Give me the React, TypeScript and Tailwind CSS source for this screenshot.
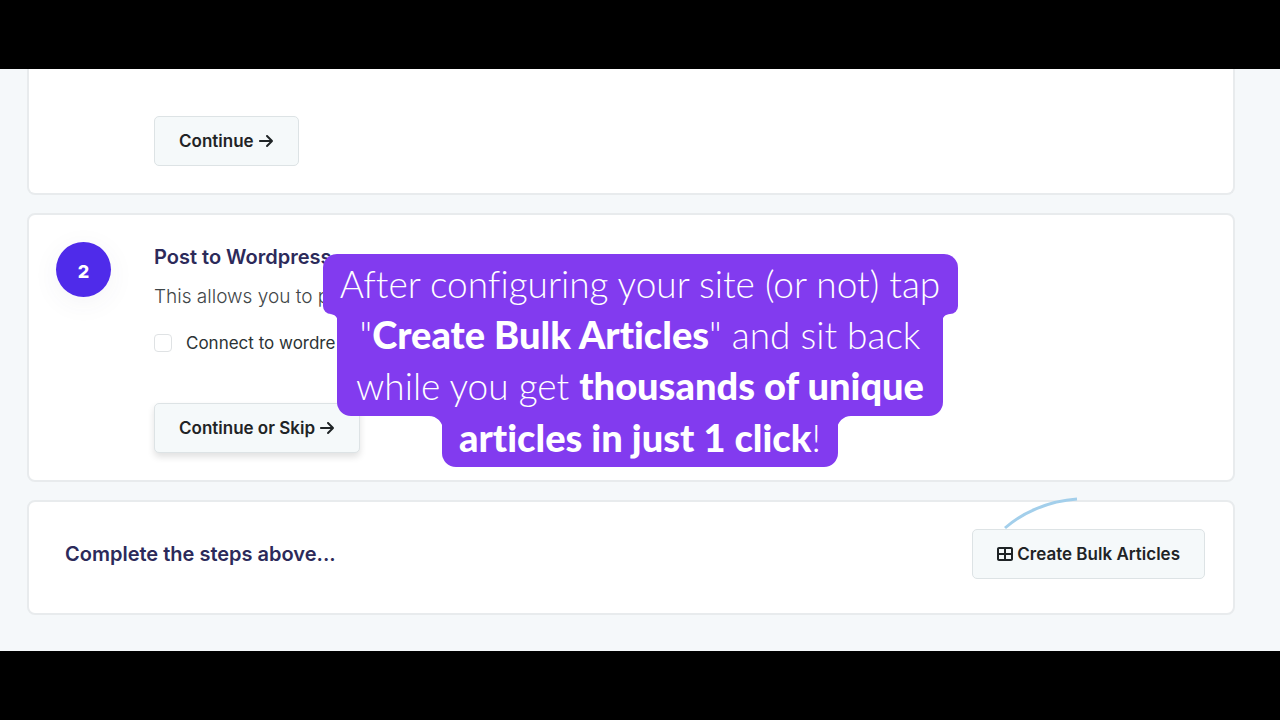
import type { ReactNode } from "react";
import { FaArrowRight, FaTableCellsLarge } from "react-icons/fa6";

const buttonBase =
  "inline-flex h-[50px] items-center gap-1 rounded-[5px] border border-[#dde3e5] bg-[#f5f9fa] px-6 text-[17px] leading-6 font-semibold whitespace-nowrap text-[#1f2426]";

function Card({ className, children }: { className: string; children: ReactNode }) {
  return (
    <section className={`relative border-2 border-[#e8ebed] bg-white ${className}`}>
      {children}
    </section>
  );
}

/* Inward curve joining a wide caption row to the narrower one below it. */
function Notch({ className, flip = false }: { className: string; flip?: boolean }) {
  return (
    <svg className={`absolute text-[#823bef] ${className}`} viewBox="0 0 10 10" aria-hidden="true">
      <path
        d={flip ? "M10 0H0v10C0 4.5 4.5 0 10 0Z" : "M0 0h10v10C10 4.5 5.5 0 0 0Z"}
        fill="currentColor"
      />
    </svg>
  );
}

function Strong({ children }: { children: ReactNode }) {
  return <strong className="text-[38px] leading-none font-black">{children}</strong>;
}

function Caption() {
  return (
    <div className="pointer-events-none absolute inset-x-0 top-[185px] z-10 flex flex-col items-center text-center font-['Lato','Liberation_Sans',sans-serif] text-[37px] leading-[51px] font-light whitespace-nowrap text-white [font-variant-ligatures:none]">
      <p className="h-[60px] w-[635px] rounded-t-[14px] rounded-b-[8px] bg-[#823bef] pt-[4px]">
        After configuring your site (or not) tap
      </p>
      <div className="relative w-[606px] rounded-b-[14px] bg-[#823bef] pb-[5px]">
        <Notch className="top-0 -left-[7px] size-[8px]" />
        <Notch className="top-0 -right-[7px] size-[8px]" flip />
        <p className="-mt-[5px]">
          "<Strong>Create Bulk Articles</Strong>" and sit back
        </p>
        <p>
          while you get <Strong>thousands of unique</Strong>
        </p>
      </div>
      <div className="relative h-[51px] w-[396px] rounded-b-[14px] bg-[#823bef]">
        <Notch className="top-0 -left-[13px] size-[14px]" />
        <Notch className="top-0 -right-[13px] size-[14px]" flip />
        <p className="-mt-[4px]">
          <Strong>articles in just 1 click</Strong>!
        </p>
      </div>
    </div>
  );
}

export default function App() {
  return (
    <div className="min-h-screen bg-black py-[69px] font-['Inter','Liberation_Sans',sans-serif]">
      <main className="relative flex flex-col gap-[18px] overflow-hidden bg-[#f5f8fa] pr-[45px] pb-9 pl-[27px]">
        <Card className="rounded-b-[8px] border-t-0 pt-[47px] pb-[27px] pl-[125px]">
          <button type="button" className={buttonBase}>
            Continue <FaArrowRight className="size-4" />
          </button>
        </Card>

        <Card className="flex items-start gap-[43px] rounded-[8px] pt-[26px] pb-[27px] pl-[27px]">
          <div className="mt-px flex size-[55px] shrink-0 items-center justify-center rounded-full bg-[#4f2bea] pt-1 text-[18px] leading-6 font-extrabold text-white shadow-[0_6px_28px_rgba(60,60,100,0.06)]">
            2
          </div>
          <div className="flex flex-col items-start whitespace-nowrap">
            <h2 className="text-[20px] leading-8 font-semibold text-[#2c2a5a]">Post to Wordpress</h2>
            <p className="mt-2 text-[19px] leading-8 font-light text-[#3f4648]">
              This allows you to p
            </p>
            <label className="mt-[18px] flex items-center gap-[14px] text-[17px] leading-6 text-[#2b3335]">
              <input
                type="checkbox"
                className="size-[18px] appearance-none rounded-[4px] border border-[#dfe2e4] bg-white checked:bg-[#4f2bea]"
              />
              Connect to wordre
            </label>
            <button
              type="button"
              className={`mt-12 shadow-[0_4px_7px_rgba(0,0,0,0.12)] ${buttonBase}`}
            >
              Continue or Skip <FaArrowRight className="size-4" />
            </button>
          </div>
        </Card>

        <Card className="flex items-center justify-between rounded-[8px] py-[27px] pr-[28px] pl-9">
          <h2 className="mb-2 text-[20px] leading-8 font-semibold text-[#2c2a5a]">
            Complete the steps above...
          </h2>
          <div className="relative mb-[7px]">
            <button type="button" className={buttonBase}>
              <FaTableCellsLarge className="size-4" /> Create Bulk Articles
            </button>
            <svg
              className="absolute -top-[33px] right-[126px] h-[34px] w-[76px]"
              viewBox="0 0 76 34"
              fill="none"
              aria-hidden="true"
            >
              <path d="M2 32C19 17 45 5 74 3" stroke="#a3cfeb" strokeWidth="3" />
            </svg>
          </div>
        </Card>

        <Caption />
      </main>
    </div>
  );
}
